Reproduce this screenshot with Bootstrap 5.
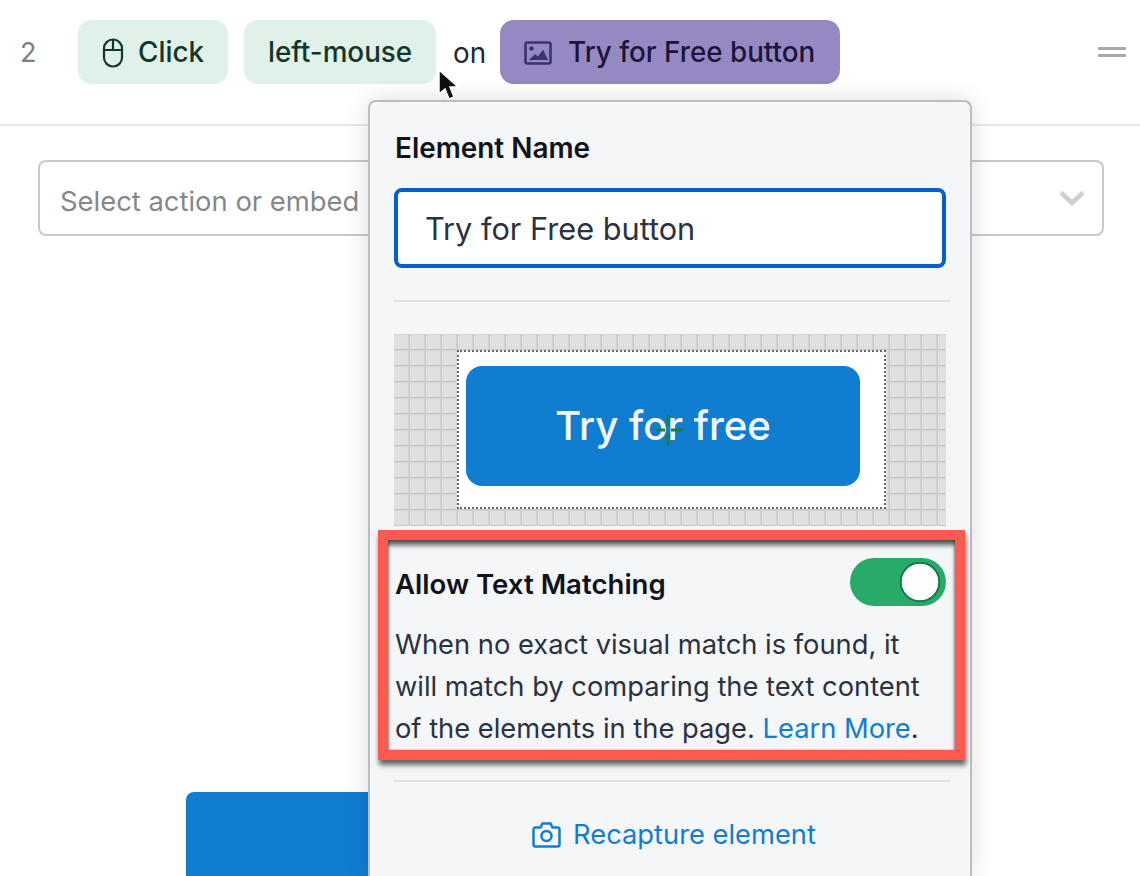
<!DOCTYPE html>
<html lang="en">
<head>
  <meta charset="UTF-8">
  <title>Step editor</title>
  <link href="https://cdn.jsdelivr.net/npm/bootstrap@5.3.0/dist/css/bootstrap.min.css" rel="stylesheet">
  <script src="https://cdn.jsdelivr.net/npm/bootstrap@5.3.0/dist/js/bootstrap.bundle.min.js"></script>
  <style>
    html, body { height: 876px; overflow: hidden; }
    body { font-family: Inter, "Liberation Sans", sans-serif; background: #fff; color: #2a3240; position: relative; }

    /* step row */
    .step-row { height: 126px; padding: 20px 14px 0 20px; border-bottom: 2px solid #e8e9ea; }
    .step-num { width: 58px; font-size: 27px; line-height: 66px; color: #7c7f82; }
    .chip { height: 64px; border-radius: 14px; font-size: 27.8px; font-weight: 450; padding: 2px 24px 0; color: #12372a; background: #dff1e8; white-space: nowrap; }
    .chip-click { width: 150px; gap: 14px; }
    .chip-key { width: 192px; margin-left: 16px; }
    .chip-on { height: 64px; line-height: 67px; font-size: 27.8px; color: #23272e; margin: 0 14px 0 17px; }
    .chip-target { width: 340px; background: #9588c3; color: #1c1738; }
    .drag-bars { width: 28px; height: 10px; margin-top: 27px; border-top: 3px solid #a9a9a9; border-bottom: 3px solid #a9a9a9; }

    /* select behind the popover */
    .action-select { margin: 34px 36px 0 38px; height: 76px; border: 2px solid #c9c9c9; border-radius: 8px; padding: 7px 17px 0 20px; font-size: 27.4px; color: #85878a; }
    .action-select svg { margin-top: -7px; }

    /* blue block at the bottom, runs on under the popover */
    .cta-block { width: 200px; height: 84px; margin: 556px 0 0 186px; background: #117dd1; border-radius: 8px 0 0 0; }

    /* popover */
    .el-popover { position: absolute; left: 368px; top: 100px; width: 604px; height: 776px; padding: 29px 24px 0 24px; background: #f5f6f8; border: 2px solid #bcbdc0; border-bottom: 0; border-radius: 8px 8px 0 0; box-shadow: 0 0 24px rgba(0,0,0,.14); }
    .el-title { font-size: 27.9px; font-weight: 600; line-height: 34px; color: #10131c; margin: 0 0 0 1px; }
    .el-input { height: 80px; margin-top: 23px; border: 4px solid #0060cc; border-radius: 8px; background: #fff; padding: 0 27px; font-size: 30.7px; color: #2a3240; box-shadow: none; }
    .el-input:focus { border-color: #0060cc; box-shadow: none; color: #2a3240; }
    .el-rule { height: 2px; background: #e0e1e3; margin-right: -4px; }
    .el-rule-top { margin-top: 32px; }
    .el-rule-bottom { margin-top: 30px; }

    .el-preview { height: 192px; margin-top: 32px; background-color: #dfe0df; background-image: repeating-linear-gradient(90deg, transparent 0 14px, #d3d4d3 14px 15px, #c6c7c6 15px 16px), repeating-linear-gradient(0deg, transparent 0 14px, #d3d4d3 14px 15px, #c6c7c6 15px 16px); background-position: 0 0, 0 -1px; padding: 16px 60px 17px 63px; }
    .el-shot { height: 159px; background: #fff; border: 2px dotted #666; padding: 14px 24px 20px 7px; }
    .el-btn { height: 120px; border-radius: 16px; background: #117dd1; color: #f4f8fc; font-size: 40.2px; font-weight: 500; position: relative; }
    .el-cross { position: absolute; left: 190px; top: 49px; width: 30px; height: 30px; }

    .match-head { margin-top: 32px; height: 48px; }
    .match-label { font-size: 27.6px; font-weight: 600; color: #10131c; margin: 5px 0 0 1px; }
    .form-switch .match-toggle { width: 96px; height: 48px; margin: 0; float: none; border: 0; background-color: #28aa68; background-position: 0 0; background-image: radial-gradient(circle at 70px 24px, #fff 18px, #1b7a4a 18.6px, #1b7a4a 20px, transparent 20.6px); }
    .match-text { font-size: 27.3px; line-height: 42px; margin: 18px 0 0 1px; white-space: nowrap; }
    .match-text a, .recapture { color: #117dd1; text-decoration: none; }
    .recapture { font-size: 27.3px; margin-top: 33px; gap: 12px; padding-left: 8px; }

    /* red annotation box */
    .note-box { position: absolute; left: 378px; top: 530px; width: 587px; height: 230px; border: 10px solid #ff5a4d; box-shadow: 1px 5px 5px rgba(0,0,0,.6), inset 0 6px 5px -1px rgba(0,0,0,.65), inset 1px 0 2px rgba(0,0,0,.25), inset -1px 0 2px rgba(0,0,0,.25); }
    .arrow-cursor { position: absolute; left: 437px; top: 68px; width: 22px; height: 34px; }
  </style>
</head>
<body>
  <!-- step header -->
  <div class="step-row d-flex align-items-start">
    <span class="step-num">2</span>
    <span class="chip chip-click d-flex align-items-center">
      <svg width="22" height="30" viewBox="0 0 22 30" fill="none" stroke="#12372a" stroke-width="2.2"><rect x="2" y="1.5" width="18" height="27" rx="9"/><path d="M2 12h18M11 1.5V12"/></svg>
      Click
    </span>
    <span class="chip chip-key d-flex align-items-center">left-mouse</span>
    <span class="chip-on">on</span>
    <span class="chip chip-target d-flex align-items-center">
      <svg class="me-3" width="28" height="24" viewBox="0 0 28 24"><rect x="1.5" y="1.5" width="25" height="21" rx="2" fill="none" stroke="#3d3272" stroke-width="2.6"/><circle cx="7.5" cy="7.5" r="2.2" fill="#3d3272"/><path d="M5 19l6-6 3 2.5 5-7 5 10.500z" fill="#3d3272"/></svg>
      Try for Free button
    </span>
    <span class="drag-bars ms-auto d-block"></span>
  </div>

  <div class="action-select d-flex align-items-center justify-content-between">
    <span>Select action or embed</span>
    <svg width="26" height="16" viewBox="0 0 26 16" fill="none" stroke="#cfcfcf" stroke-width="4.500"><path d="M2 2.500l11 10.500 11-10.500"/></svg>
  </div>

  <div class="cta-block"></div>

  <!-- element popover -->
  <div class="el-popover">
    <h6 class="el-title">Element Name</h6>
    <input class="form-control el-input" type="text" value="Try for Free button">
    <div class="el-rule el-rule-top"></div>

    <div class="el-preview">
      <div class="el-shot">
        <div class="el-btn d-flex align-items-center justify-content-center">
          Try for free
          <svg class="el-cross" viewBox="0 0 30 30"><path d="M12 0v12M12 18v12M0 15h9M15 15h12" stroke="#1f7f3c" stroke-width="3" fill="none"/></svg>
        </div>
      </div>
    </div>

    <div class="match-head d-flex justify-content-between align-items-center">
      <span class="match-label">Allow Text Matching</span>
      <div class="form-check form-switch p-0 m-0 d-flex">
        <input class="form-check-input match-toggle" type="checkbox" role="switch" checked>
      </div>
    </div>
    <p class="match-text">When no exact visual match is found, it<br>will match by comparing the text content<br>of the elements in the page. <a href="#">Learn More</a>.</p>

    <div class="el-rule el-rule-bottom"></div>

    <a class="recapture d-flex align-items-center justify-content-center" href="#">
      <svg width="29" height="26" viewBox="0 0 29 26" fill="none" stroke="#117dd1" stroke-width="2.500"><path d="M3.500 5.500h5l2-4h8l2 4h5a2 2 0 0 1 2 2v15a2 2 0 0 1-2 2h-22a2 2 0 0 1-2-2v-15a2 2 0 0 1 2-2z"/><circle cx="14.500" cy="14" r="5"/></svg>
      Recapture element
    </a>
  </div>

  <div class="note-box"></div>

  <svg class="arrow-cursor" viewBox="0 0 22 34"><path d="M2 2v24l6-5 4 10 5-2-4-10h8z" fill="#0c0f14" stroke="#fff" stroke-width="1.500"/></svg>
</body>
</html>
